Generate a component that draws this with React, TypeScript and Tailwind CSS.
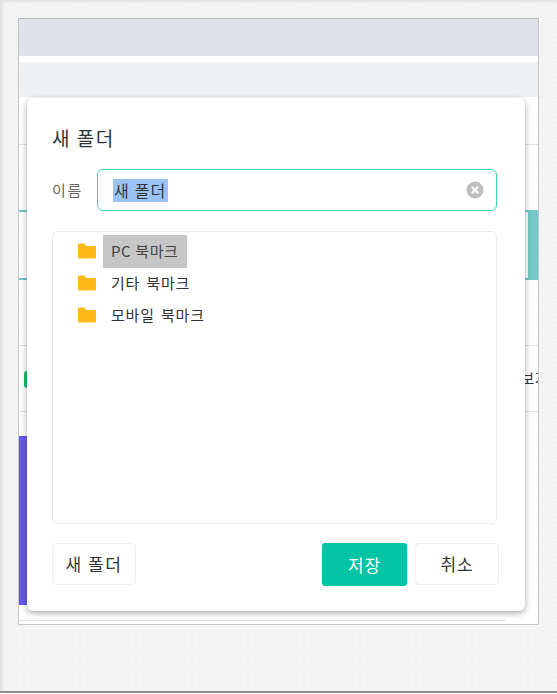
const font = "font-['Noto_Sans_CJK_KR','Noto_Sans',sans-serif]"

const folders = ["PC 북마크", "기타 북마크", "모바일 북마크"]

function FolderIcon() {
  return (
    <svg width="18" height="16" viewBox="0 0 18 16" fill="#ffb918" className="shrink-0">
      <path d="M0 1.5A1 1 0 0 1 1 .5h5.200l2.200 2.500H17a1 1 0 0 1 1 1V14.500a1 1 0 0 1-1 1H1a1 1 0 0 1-1-1Z" />
    </svg>
  )
}

function PageBehind() {
  return (
    <div className="flex h-[607px] w-[521px] flex-col overflow-hidden border border-[#c4c6c9] border-t-[#b4b7bb] bg-white">
      <div className="h-[37px] shrink-0 bg-[#dfe2e6]" />
      <div className="h-[6px] shrink-0" />
      <div className="h-[35px] shrink-0 bg-[#eff0f2]" />
      <div className="h-[48px] shrink-0 border-b border-[#dfe2e6]" />
      <div className="h-[65px] shrink-0" />
      <div className="flex h-[70px] shrink-0 items-stretch justify-end border-y-2 border-[#74c8c8]">
        <div className="w-[10px] bg-[#74c8c8]" />
      </div>
      <div className="h-[66px] shrink-0 border-b border-[#dfe2e6]" />
      <div className="flex h-[66px] shrink-0 items-center justify-between border-b border-[#dfe2e6] pl-[5px]">
        <div className="mt-[2px] h-[17px] w-[8px] rounded-[3px] bg-[#14c264]" />
        <span className="mr-[-11px] text-[15px] tracking-[0.500px] whitespace-nowrap text-[#333]">보기</span>
      </div>
      <div className="h-[24px] shrink-0" />
      <div className="h-[169px] w-[40px] shrink-0 bg-[#6758f2]" />
      <div className="h-[15px] shrink-0" />
      <div className="w-[487px] border-t border-[#dfe2e6]" />
    </div>
  )
}

export default function App() {
  return (
    <div className={`relative flex h-[693px] w-[557px] items-start overflow-hidden border-b-2 border-[#8d8d8d] bg-[#f4f4f4] bg-[radial-gradient(#eeeeee_1px,transparent_1px)] bg-[length:7px_5px] pt-[18px] pl-[18px] shadow-[inset_3px_2px_2px_#e2e2e2] ${font}`}>
      <PageBehind />

      <div className="absolute top-[98px] left-[27px] flex h-[513px] w-[498px] flex-col rounded-[6px] bg-white pt-[26px] pr-[28px] pb-[25px] pl-[25px] shadow-[0_2px_6px_rgba(0,0,0,0.35)]">
        <h2 className="text-[19px] leading-[28px] font-normal tracking-[1.500px] text-[#333]">새 폴더</h2>

        <div className="mt-[17px] flex items-center">
          <label className="w-[45px] text-[15px] tracking-[1.800px] text-[#666]">이름</label>
          <div className="flex h-[42px] flex-1 items-center justify-between rounded-[6px] border border-[#3bd3b8] pr-[12px] pl-[15px]">
            <span className="bg-[#9bc2f5] px-px text-[16px] leading-[23px] tracking-[1.200px] text-[#333]">새 폴더</span>
            <svg width="18" height="18" viewBox="0 0 18 18">
              <circle cx="9" cy="9" r="8.500" fill="#bfbfbf" />
              <path d="M5.800 5.800l6.400 6.400M12.200 5.800l-6.400 6.400" stroke="#fff" strokeWidth="2" />
            </svg>
          </div>
        </div>

        <div className="mt-[20px] flex h-[293px] flex-col rounded-[6px] border border-[#e9eaec] pt-[3px] pl-[25px]">
          {folders.map((name, i) => (
            <div key={name} className="flex h-[32px] items-center">
              <FolderIcon />
              <span className={`ml-[7px] flex h-[33px] items-center pr-[9px] pl-[8px] text-[15px] whitespace-pre ${i === 0 ? "bg-[#c6c6c6] tracking-[0.600px] text-[#444]" : "tracking-[0.800px] [word-spacing:2px] text-[#333]"}`}>
                {name}
              </span>
            </div>
          ))}
        </div>

        <div className="mt-[19px] flex items-start justify-between">
          <button className="h-[42px] w-[84px] rounded-[4px] border border-[#eeeeee] bg-white text-[17px] tracking-[1.600px] text-[#333]">새 폴더</button>
          <div className="mr-[-2px] flex items-start gap-[8px]">
            <button className="h-[43px] w-[85px] rounded-[3px] bg-[#03c5a6] text-[17px] tracking-[0.900px] text-white">저장</button>
            <button className="h-[42px] w-[84px] rounded-[4px] border border-[#eeeeee] bg-white text-[17px] tracking-[0.900px] text-[#333]">취소</button>
          </div>
        </div>
      </div>
    </div>
  )
}
